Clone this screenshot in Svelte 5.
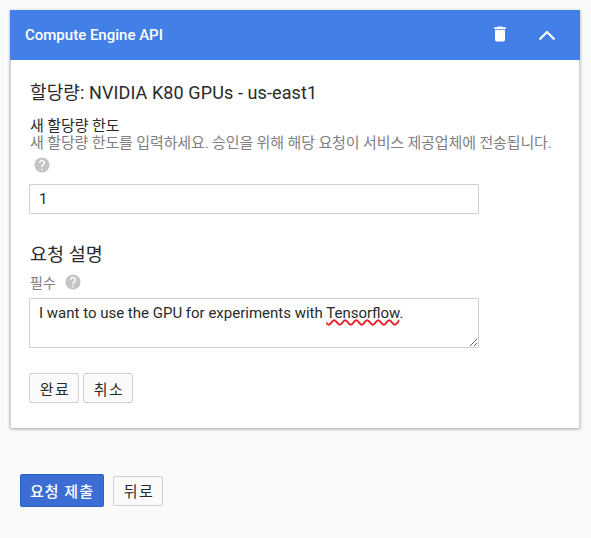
<script>
  let quota = $state("1");
</script>

{#snippet help()}
  <svg class="help" viewBox="0 0 24 24" aria-hidden="true">
    <path d="M12 2C6.48 2 2 6.48 2 12s4.48 10 10 10 10-4.48 10-10S17.52 2 12 2zm1 17h-2v-2h2v2zm2.07-7.75l-.9.92C13.45 12.9 13 13.5 13 15h-2v-.5c0-1.1.45-2.1 1.17-2.83l1.24-1.26c.37-.36.59-.86.59-1.41 0-1.1-.9-2-2-2s-2 .9-2 2H8c0-2.21 1.79-4 4-4s4 1.79 4 4c0 .88-.36 1.68-.93 2.25z" />
  </svg>
{/snippet}

<main class="page">
  <section class="panel">
    <header class="panel-head">
      <span class="panel-title">Compute Engine API</span>
      <svg class="trash" viewBox="0 0 24 24" aria-hidden="true">
        <path d="M6 19c0 1.1.9 2 2 2h8c1.1 0 2-.9 2-2V7H6v12zM19 4h-3.5l-1-1h-5l-1 1H5v2h14V4z" />
      </svg>
      <svg class="chevron" viewBox="0 0 24 24" aria-hidden="true">
        <path d="M3 17.5 12 8.5l9 9" />
      </svg>
    </header>

    <div class="panel-body">
      <h2 class="quota-title">할당량: NVIDIA K80 GPUs - us-east1</h2>

      <div class="field-label">새 할당량 한도</div>
      <p class="field-hint">새 할당량 한도를 입력하세요. 승인을 위해 해당 요청이 서비스 제공업체에 전송됩니다.</p>
      <div class="hint-icon">{@render help()}</div>
      <input class="text-input" bind:value={quota} />

      <h3 class="section-title">요청 설명</h3>
      <div class="required">필수 {@render help()}</div>
      <div class="textarea">I want to use the GPU for experiments with <span class="misspelled">Tensorflow</span>.</div>

      <div class="actions">
        <button>완료</button>
        <button>취소</button>
      </div>
    </div>
  </section>

  <footer class="footer">
    <button class="primary">요청 제출</button>
    <button>뒤로</button>
  </footer>
</main>

<style>
  :global(body) {
    margin: 0;
    background: #f9fafa;
  }

  .page {
    height: 538px;
    box-sizing: border-box;
    padding: 10px 11px 0 10px;
    font-family: Roboto, "Noto Sans CJK KR", sans-serif;
    color: #2a2a2a;
    overflow: hidden;
  }

  .panel {
    background: #fff;
    box-shadow: 0 1px 3px rgba(0, 0, 0, 0.35);
  }

  .panel-head {
    display: flex;
    align-items: center;
    height: 50px;
    padding: 0 23px 0 15px;
    background: #427fe6;
    color: #fff;
  }

  .panel-title {
    flex: 1;
    font-size: 15px;
    font-weight: 500;
  }

  .trash {
    width: 20px;
    height: 20px;
    margin: -3px 27px 0 0;
    fill: #fff;
  }

  .chevron {
    width: 20px;
    height: 20px;
    fill: none;
    stroke: #fff;
    stroke-width: 2.6;
  }

  .panel-body {
    height: 368px;
    padding: 20px 18px 0 18px;
    border-left: 1px solid #d4d4d4;
    border-right: 1px solid #d4d4d4;
    box-sizing: border-box;
  }

  .quota-title {
    margin: 0 0 0 1px;
    font-size: 18px;
    line-height: 25px;
    font-weight: 400;
    letter-spacing: 0.1px;
  }

  .field-label {
    margin: 13px 0 0 1px;
    font-size: 15px;
    line-height: 17px;
    letter-spacing: -0.1px;
  }

  .field-hint {
    margin: 0 0 0 1px;
    font-size: 15px;
    line-height: 17px;
    letter-spacing: -0.14px;
    color: #808080;
    white-space: nowrap;
  }

  .hint-icon {
    height: 18px;
    margin: 4px 0 0 4px;
  }

  .help {
    width: 18px;
    height: 18px;
    fill: #c4c4c4;
    vertical-align: top;
  }

  .text-input {
    display: block;
    width: 450px;
    height: 30px;
    margin-top: 10px;
    padding: 0 9px;
    box-sizing: border-box;
    border: 1px solid #d0d0d0;
    border-radius: 1px;
    outline: none;
    font: 15px Roboto, sans-serif;
    color: #2a2a2a;
  }

  .section-title {
    margin: 27px 0 0 1px;
    font-size: 18.5px;
    line-height: 28px;
    font-weight: 400;
  }

  .required {
    display: flex;
    align-items: center;
    gap: 8px;
    margin: 4px 0 0 1px;
    height: 18px;
    font-size: 14px;
    color: #808080;
  }

  .textarea {
    width: 450px;
    height: 50px;
    margin-top: 7px;
    padding: 5px 9px;
    box-sizing: border-box;
    border: 1px solid #d0d0d0;
    border-radius: 1px;
    font-size: 15px;
    line-height: 18px;
    overflow: auto;
    resize: both;
  }

  .misspelled {
    text-decoration: underline wavy #e8202a 1.5px;
    text-underline-offset: 1px;
  }

  .actions {
    display: flex;
    gap: 4px;
    margin-top: 25px;
  }

  button {
    height: 30px;
    padding: 0 0 0 2px;
    width: 50px;
    box-sizing: border-box;
    border: 1px solid #d0d0d0;
    border-radius: 2px;
    background: #fafafa;
    font: 15px Roboto, "Noto Sans CJK KR", sans-serif;
    letter-spacing: 1.5px;
    color: #2a2a2a;
  }

  .footer {
    display: flex;
    align-items: center;
    gap: 9px;
    margin: 46px 0 0 10px;
  }

  .primary {
    height: 33px;
    width: 84px;
    padding: 0;
    background: #3b6dd4;
    border-color: #2a62cc;
    color: #fff;
    font-weight: 500;
    letter-spacing: 1px;
  }
</style>
